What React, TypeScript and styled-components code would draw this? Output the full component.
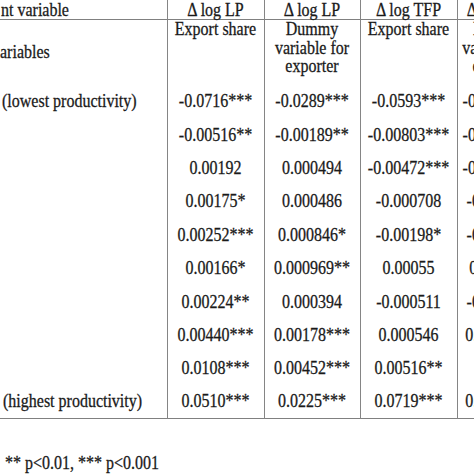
import React from 'react';
import styled, { createGlobalStyle } from 'styled-components';

type Row = { label?: string; indent?: number; values: string[] };

const rows: Row[] = [
  { label: '(lowest productivity)', indent: 2, values: ['-0.0716***', '-0.0289***', '-0.0593***', '-0.0412***'] },
  { values: ['-0.00516**', '-0.00189**', '-0.00803***', '-0.0121***'] },
  { values: ['0.00192', '0.000494', '-0.00472***', '-0.00604**'] },
  { values: ['0.00175*', '0.000486', '-0.000708', '-0.00327*'] },
  { values: ['0.00252***', '0.000846*', '-0.00198*', '-0.00215*'] },
  { values: ['0.00166*', '0.000969**', '0.00055', '0.00102*'] },
  { values: ['0.00224**', '0.000394', '-0.000511', '-0.00845*'] },
  { values: ['0.00440***', '0.00178***', '0.000546', '0.00231**'] },
  { values: ['0.0108***', '0.00452***', '0.00516**', '0.0123'] },
  { label: '(highest productivity)', indent: 3, values: ['0.0510***', '0.0225***', '0.0719***', '0.0488***'] },
];

const App: React.FC = () => {
  return (
    <Page>
      <GlobalStyle />
      <Table>
        <colgroup>
          <col style={{ width: 167 }} />
          <col style={{ width: 97 }} />
          <col style={{ width: 96 }} />
          <col style={{ width: 97 }} />
          <col style={{ width: 84 }} />
        </colgroup>
        <thead>
          <HeadRow>
            <LabelCell $indent={1}><Text>nt variable</Text></LabelCell>
            <Cell><Text>Δ log LP</Text></Cell>
            <Cell><Text>Δ log LP</Text></Cell>
            <Cell><Text>Δ log TFP</Text></Cell>
            <Cell><Text>Δ log TFP</Text></Cell>
          </HeadRow>
          <SubHeadRow>
            <LabelCell $indent={0}><Text>ariables</Text></LabelCell>
            <SubCell><SubText>Export share</SubText></SubCell>
            <SubCell><SubText>Dummy variable for exporter</SubText></SubCell>
            <SubCell><SubText>Export share</SubText></SubCell>
            <SubCell><SubText>Dummy variable for exporter</SubText></SubCell>
          </SubHeadRow>
        </thead>
        <tbody>
          {rows.map((r, i) => (
            <DataRow key={i}>
              <LabelCell $indent={r.indent ?? 0}><Text>{r.label ?? ''}</Text></LabelCell>
              {r.values.map((v, j) => (
                <Cell key={j}><Text>{v}</Text></Cell>
              ))}
            </DataRow>
          ))}
        </tbody>
      </Table>
      <Note><Text>** p&lt;0.01, *** p&lt;0.001</Text></Note>
    </Page>
  );
};

// component style
const GlobalStyle = createGlobalStyle`
  html, body {
    margin: 0;
    padding: 0;
    background: #ffffff;
  }
  body {
    overflow: hidden;
  }
`;

const Page = styled.div`
  width: 474px;
  height: 474px;
  overflow: hidden;
  background: #ffffff;
  font-family: 'Liberation Serif', 'Times New Roman', serif;
  font-size: 16px;
  color: #1a1a1a;
  -webkit-text-stroke: 0.25px #1a1a1a;
`;

// the source raster is slightly stretched vertically
const Text = styled.span`
  display: inline-block;
  line-height: 17px;
  transform: scaleY(1.12);
`;

const SubText = styled.span`
  display: block;
  line-height: 16.5px;
  transform: scaleY(1.12);
  transform-origin: top center;
`;

const Table = styled.table`
  width: 541px;
  table-layout: fixed;
  border-collapse: collapse;
  border-bottom: 1.5px solid #808080;
`;

const Cell = styled.td`
  padding: 0;
  text-align: center;
  vertical-align: middle;
  white-space: nowrap;
  border-left: 1.5px solid #858585;
`;

const SubCell = styled(Cell)`
  vertical-align: top;
  white-space: normal;
  padding: 0 4px;
`;

const LabelCell = styled.td<{ $indent: number }>`
  padding: 0 0 0 ${(p) => p.$indent}px;
  text-align: left;
  vertical-align: middle;
  white-space: nowrap;
`;

const HeadRow = styled.tr`
  height: 19px;
  line-height: 19px;
  border-bottom: 1.5px solid #808080;
`;

const SubHeadRow = styled.tr`
  height: 65px;
`;

const DataRow = styled.tr`
  height: 33.4px;
`;

const Note = styled.p`
  margin: 35px 0 0 5px;
  line-height: 18px;
`;

export default App;
